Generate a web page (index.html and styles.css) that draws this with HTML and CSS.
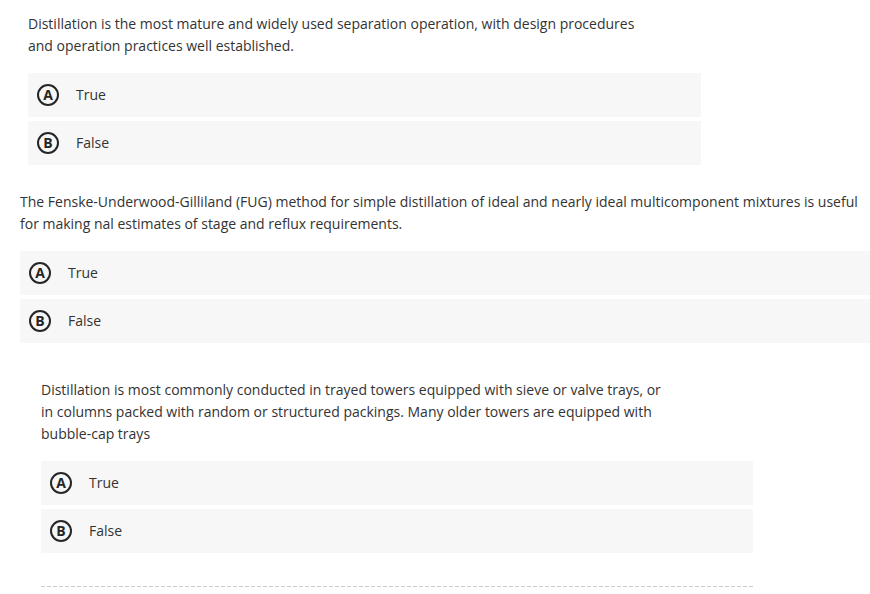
FILE: index.html
```html
<!DOCTYPE html>
<html>
<head>
<meta charset="utf-8">
<link rel="stylesheet" href="styles.css">
</head>
<body>
<div class="page">
  <section class="question q1">
    <p class="prompt">Distillation is the most mature and widely used separation operation, with design procedures<br>and operation practices well established.</p>
    <div class="options">
      <div class="option"><span class="badge">A</span><span class="label">True</span></div>
      <div class="option"><span class="badge">B</span><span class="label">False</span></div>
    </div>
  </section>
  <section class="question q2">
    <p class="prompt">The Fenske-Underwood-Gilliland (FUG) method for simple distillation of ideal and nearly ideal multicomponent mixtures is useful<br>for making nal estimates of stage and reflux requirements.</p>
    <div class="options">
      <div class="option"><span class="badge">A</span><span class="label">True</span></div>
      <div class="option"><span class="badge">B</span><span class="label">False</span></div>
    </div>
  </section>
  <section class="question q3">
    <p class="prompt">Distillation is most commonly conducted in trayed towers equipped with sieve or valve trays, or<br>in columns packed with random or structured packings. Many older towers are equipped with<br>bubble-cap trays</p>
    <div class="options">
      <div class="option"><span class="badge">A</span><span class="label">True</span></div>
      <div class="option"><span class="badge">B</span><span class="label">False</span></div>
    </div>
    <div class="divider"></div>
  </section>
</div>
</body>
</html>
```

FILE: styles.css
```css
html, body {
  margin: 0;
  padding: 0;
  background: #ffffff;
}
body {
  font-family: "Open Sans", "Liberation Sans", sans-serif;
  font-size: 14px;
  line-height: 22px;
  color: #333333;
  width: 870px;
  height: 594px;
  overflow: hidden;
}
.page {
  display: flex;
  flex-direction: column;
  padding-top: 13px;
}
.question {
  display: flex;
  flex-direction: column;
}
.prompt {
  margin: 0;
  white-space: nowrap;
}
.options {
  display: flex;
  flex-direction: column;
  gap: 4px;
  margin-top: 16px;
}
.option {
  display: flex;
  align-items: center;
  height: 44px;
  background: #f7f7f7;
  padding-left: 9px;
  box-sizing: border-box;
}
.badge {
  flex: none;
  width: 22px;
  height: 22px;
  box-sizing: border-box;
  border: 2px solid #262626;
  border-radius: 50%;
  display: flex;
  align-items: center;
  justify-content: center;
  font-weight: 700;
  font-size: 14px;
  line-height: 1;
  color: #262626;
  margin-right: 17px;
}
.label {
  color: #333333;
}
.q1 {
  margin-left: 28px;
  width: 673px;
}
.q2 {
  margin-left: 20px;
  width: 850px;
  margin-top: 26px;
}
.q3 {
  margin-left: 41px;
  width: 712px;
  margin-top: 36px;
}
.divider {
  margin-top: 33px;
  height: 1px;
  background: repeating-linear-gradient(to right, #cccccc 0, #cccccc 4px, transparent 4px, transparent 6px);
}
```
